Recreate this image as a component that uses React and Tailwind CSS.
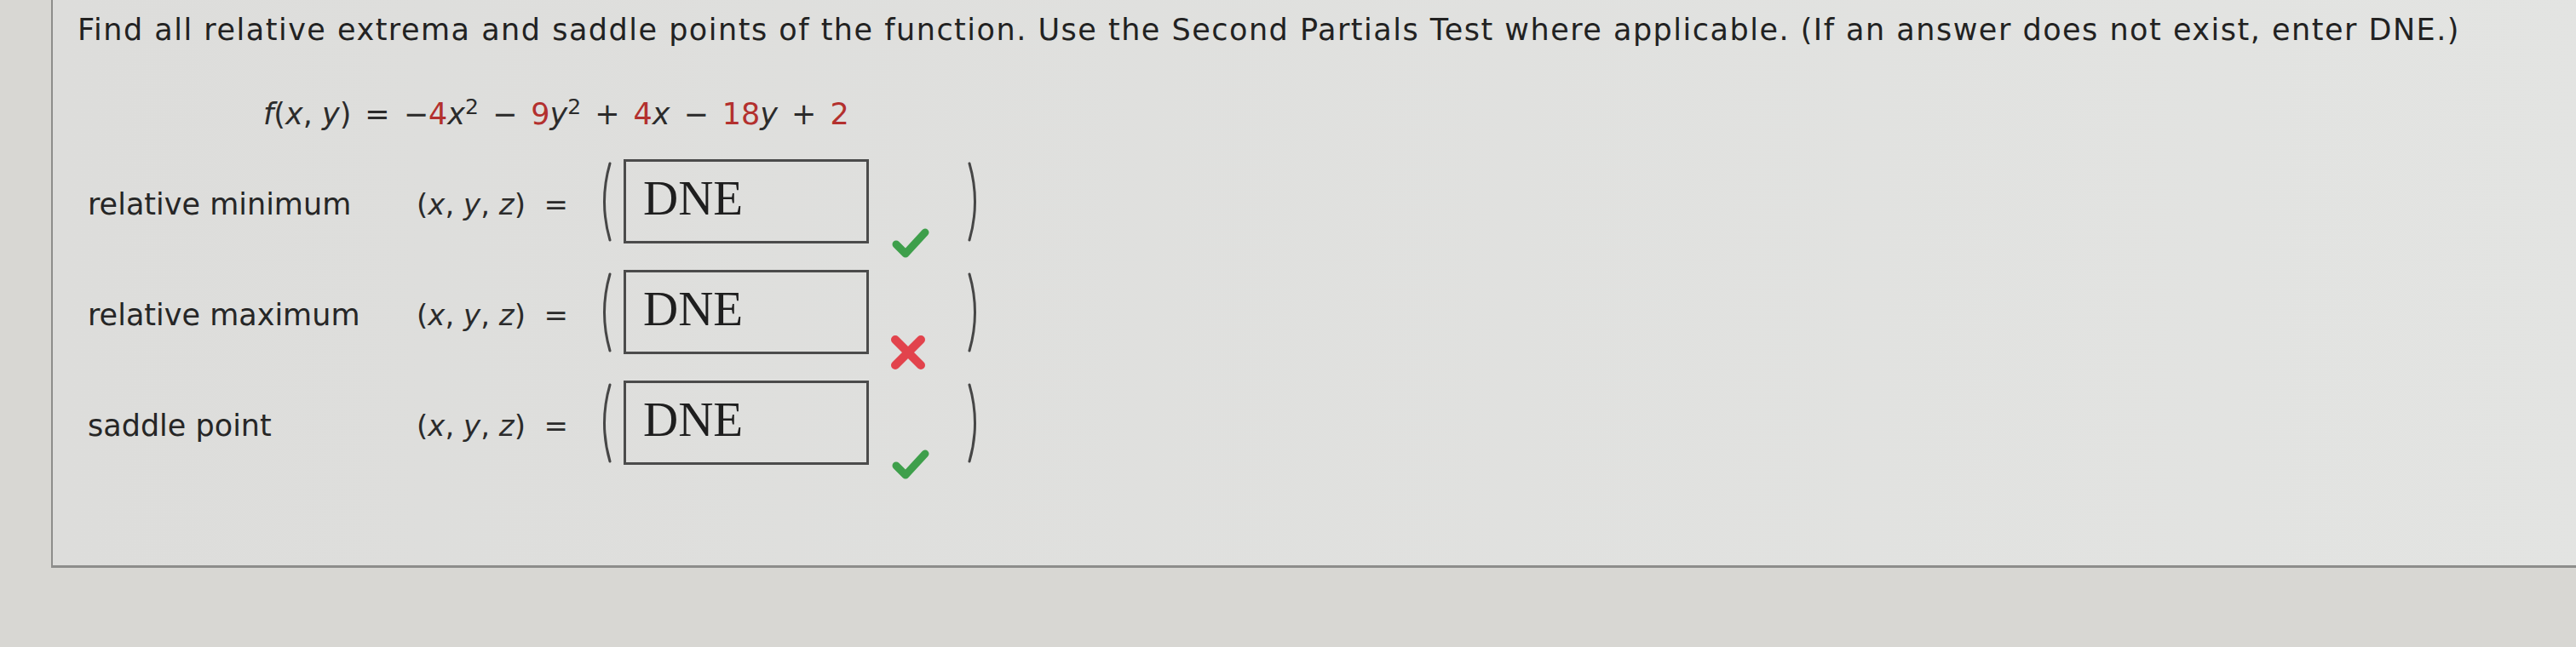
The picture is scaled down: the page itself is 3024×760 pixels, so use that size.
import React from 'react';

const sans = { fontFamily: '"DejaVu Sans", Verdana, sans-serif' };
const serif = { fontFamily: '"Liberation Serif", "Times New Roman", serif' };

function Paren({ side }) {
  const d = side === 'left' ? 'M13 2 Q0 47 13 92' : 'M2 2 Q15 47 2 92';
  return (
    <svg width="15" height="94" viewBox="0 0 15 94" className="shrink-0">
      <path d={d} fill="none" stroke="#464646" strokeWidth="3" strokeLinecap="round" />
    </svg>
  );
}

function Check() {
  return (
    <svg width="46" height="38" viewBox="0 0 46 38">
      <path d="M6 21 L17 32 L40 7" fill="none" stroke="#3e9f4b" strokeWidth="9" strokeLinecap="round" strokeLinejoin="round" />
    </svg>
  );
}

function Cross() {
  return (
    <svg width="48" height="44" viewBox="0 0 48 44">
      <path d="M9 7 L39 37 M39 7 L9 37" fill="none" stroke="#e2434c" strokeWidth="10" strokeLinecap="round" />
    </svg>
  );
}

function Op({ children }) {
  return <span className="mx-[16px]">{children}</span>;
}

function Triple() {
  return (
    <span className="whitespace-pre">
      (<i>x</i>, <i>y</i>, <i>z</i>)  =
    </span>
  );
}

function AnswerRow({ label, correct }) {
  return (
    <div className="flex items-center h-[99px]">
      <div className="w-[386px] text-[35px] text-[#262626] pt-[8px]">{label}</div>
      <div className="w-[214px] text-[34px] text-[#2b2b2b] pt-[8px]">
        <Triple />
      </div>
      <Paren side="left" />
      <div className="ml-[14px] w-[288px] h-[99px] border-[3px] border-[#4b4b4b] flex items-center pl-[20px]">
        <span style={serif} className="text-[57px] text-[#1e1e1e] leading-none pb-[8px]">DNE</span>
      </div>
      <div className="w-[116px] h-[99px] flex items-end pl-[26px]">
        <div className={correct ? '-mb-[18px]' : '-mb-[20px] -ml-[4px]'}>{correct ? <Check /> : <Cross />}</div>
      </div>
      <Paren side="right" />
    </div>
  );
}

export default function App() {
  const red = 'text-[#b3302e]';
  return (
    <div style={sans} className="w-[3024px] h-[760px] bg-[#d8d7d3] overflow-hidden">
      <div className="ml-[60px] h-[667px] border-l-2 border-b-[3px] border-[#8d8d8b] bg-gradient-to-r from-[#dddddb] to-[#e3e4e2]">
        <div className="pl-[29px] pt-[14px] text-[35px] tracking-[1.5px] leading-[42px] text-[#222222] whitespace-nowrap">
          Find all relative extrema and saddle points of the function. Use the Second Partials Test where applicable. (If an answer does not exist, enter DNE.)
        </div>
        <div className="pl-[247px] pt-[57px] text-[35px] leading-[42px] text-[#2b2b2b] whitespace-nowrap">
          <i>f</i>(<i>x</i>, <i>y</i>)<Op>=</Op>−<span className={red}>4</span><i>x</i><sup className="text-[25px]">2</sup><Op>−</Op><span className={red}>9</span><i>y</i><sup className="text-[25px]">2</sup><Op>+</Op><span className={red}>4</span><i>x</i><Op>−</Op><span className={red}>18</span><i>y</i><Op>+</Op><span className={red}>2</span>
        </div>
        <div className="pl-[41px] pt-[32px] flex flex-col gap-[31px]">
          <AnswerRow label="relative minimum" correct />
          <AnswerRow label="relative maximum" correct={false} />
          <AnswerRow label="saddle point" correct />
        </div>
      </div>
    </div>
  );
}
